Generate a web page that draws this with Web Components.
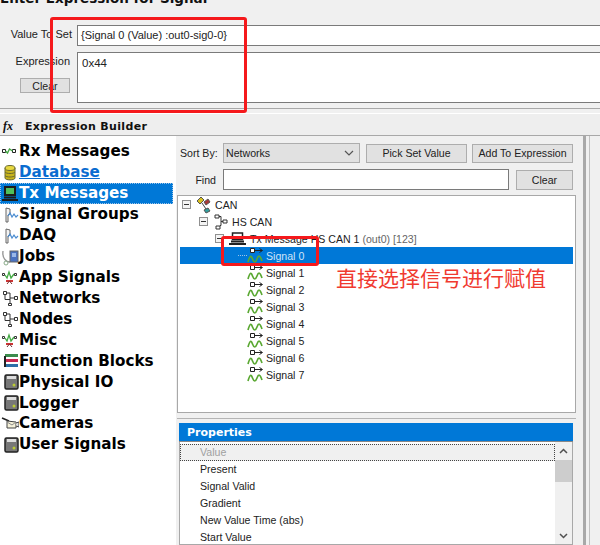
<!DOCTYPE html>
<html>
<head>
<meta charset="utf-8">
<style>
  html, body { margin: 0; padding: 0; height: 545px; overflow: hidden; background: #f0f0f0; }
</style>
</head>
<body>
<signal-dialog></signal-dialog>
<script>
const UI_FONT = `"Liberation Sans", "Noto Sans CJK SC", sans-serif`

const ICONS = {
  rx: `<path d="M2.500 7.500h3v3h-3zM12.500 7.500h3v3h-3z" fill="#fff" stroke="#222"/><path d="M5.500 9l2 2 2-4 3 2" fill="none" stroke="#4a4" stroke-width="1.400"/>`,
  db: `<path d="M5 5v10c0 2.500 10 2.500 10 0V5z" fill="#c8b41c" stroke="#6a6a30"/><ellipse cx="10" cy="5" rx="5" ry="2.500" fill="#e8d840" stroke="#6a6a30"/><path d="M5 9c1 2 9 2 10 0M5 12.500c1 2 9 2 10 0" fill="none" stroke="#6a6a30"/>`,
  tx: `<rect x="4" y="2" width="12" height="10" fill="#1c1c1c"/><rect x="6" y="4" width="8" height="6" fill="#4fbf5a"/><path d="M4 12.500h12v2H4zM2 15h16v2H2z" fill="#1c1c1c"/>`,
  group: `<path d="M6 3l4 1v5l-2 1v7H6z" fill="#f4f4f4" stroke="#666"/><path d="M8 11l2-3 2 4 2-3 2 3 2-2" fill="none" stroke="#4a8cd0" stroke-width="1.200"/>`,
  jobs: `<path d="M3 4c-1 7 3 11 7 11" fill="none" stroke="#999" stroke-width="1.400"/><circle cx="6" cy="16" r="2" fill="none" stroke="#8a8"/><rect x="10" y="4" width="8" height="11" fill="#4a72c0" stroke="#666"/><rect x="12" y="6" width="4" height="4" fill="#9ab8e8"/>`,
  app: `<path d="M2.500 6.500h2v2h-2zM14.500 6.500h2v2h-2z" fill="#fff" stroke="#333"/><path d="M5 8l2 3 2-6 2 6 3-4" fill="none" stroke="#4a4" stroke-width="1.300"/><path d="M6 14h7" stroke="#c33" stroke-width="2"/><path d="M7 17l2.500-3 2.500 3" fill="none" stroke="#733"/>`,
  net: `<path d="M3.500 3.500h3v3h-3zM14.500 8.500h3v3h-3zM8.500 15.500h3v2h-3z" fill="#fff" stroke="#333"/><path d="M6.500 5h3.500v10M10 10h4.500M5 6.500v5h5" fill="none" stroke="#333"/>`,
  fn: `<path d="M5 3h13v3H5z" fill="#3c8c4c"/><path d="M5 8h13v3H5z" fill="#c82850"/><path d="M5 13h13v3H5z" fill="#2c70a8"/><path d="M5 5v11" stroke="#222" stroke-width="2"/>`,
  io: `<rect x="5" y="3" width="13" height="14" rx="1.500" fill="#777" stroke="#222" stroke-width="1.500"/><path d="M7 4h9v3H7z" fill="#ddd"/><circle cx="14" cy="13" r="1.500" fill="#bc3"/>`,
  cam: `<path d="M2 4l7 3" stroke="#222" stroke-width="1.500"/><path d="M7 7l9 1v6H7z" fill="#f4f0d8" stroke="#444"/><path d="M16 9l3-1v5l-3-1" fill="#ddd" stroke="#444"/><path d="M7 8l5 3 4-3" fill="none" stroke="#888"/>`,
  sig: `<path d="M3.500 2.500h4v4h-4z" fill="#fff" stroke="#222"/><path d="M8 4.500h7M12.500 2.500l3 2-3 2" fill="none" stroke="#222"/><path d="M1 16c2-7 3-7 4.500-3s3 4 4.500 0 3-4 5 2" fill="none" stroke="#5aa832" stroke-width="1.700"/>`,
  can: `<path d="M1 6l4-4 3 3-4 4z" fill="#d8c020" stroke="#555"/><path d="M8 7l4-3 2 3-4 3z" fill="#a83838" stroke="#555"/><path d="M8 15l4-2 2 3-4 2z" fill="#30a0a0" stroke="#555"/><path d="M6 8l4 6" stroke="#444"/>`,
  hs: `<path d="M2 3h4v3H2zM10 8h4v3h-4zM3 14h4v3H3z" fill="#fff" stroke="#333"/><path d="M6 4.500h2v9M8 9.500h2M8 13.500H7" fill="none" stroke="#333"/>`,
  msg: `<rect x="3.500" y="4" width="10" height="6.500" fill="#fff" stroke="#222" stroke-width="1.500"/><path d="M2 11.500h13v2H2zM0 14h17v2H0z" fill="#222"/>`
}

function icon(name, size = 19) {
  return `<svg width="${size}" height="${size}" viewBox="0 0 19 19" style="display:block;flex:none">${ICONS[name]}</svg>`
}

class SideItem extends HTMLElement {
  constructor() {
    super()
    this.attachShadow({ mode: 'open' })
  }

  connectedCallback() {
    this.shadowRoot.innerHTML = `
      <style>
        :host {
          height: 20.930px;
          display: flex;
          align-items: center;
          box-sizing: border-box;
          color: #000;
          font: bold 15.200px "DejaVu Sans", sans-serif;
          white-space: nowrap;
        }
        :host([selected]) {
          background: #0078d7;
          color: #fff;
          outline: 1px dotted #9cc4e8;
          outline-offset: -1px;
        }
        :host([link]) { color: #0a6cd0; text-decoration: underline; }
      </style>
      ${icon(this.getAttribute('icon'))}<span><slot></slot></span>
    `
  }
}

class SideList extends HTMLElement {
  constructor() {
    super()
    this.attachShadow({ mode: 'open' })
    this.shadowRoot.innerHTML = `
      <style>
        :host {
          width: 176px;
          flex: none;
          display: flex;
          flex-direction: column;
          box-sizing: border-box;
          padding: 5px 3px 0 0;
          background: #fff;
        }
      </style>
      <slot></slot>
    `
  }
}

class PushButton extends HTMLElement {
  constructor() {
    super()
    this.attachShadow({ mode: 'open' })
    this.shadowRoot.innerHTML = `
      <style>
        :host {
          display: flex;
          align-items: center;
          justify-content: center;
          box-sizing: border-box;
          flex: none;
          background: #e1e1e1;
          border: 1px solid #adadad;
          color: #222;
          font: 10.600px ${UI_FONT};
          white-space: nowrap;
        }
      </style>
      <slot></slot>
    `
  }
}

class FormPane extends HTMLElement {
  constructor() {
    super()
    this.attachShadow({ mode: 'open' })
    this.shadowRoot.innerHTML = `
      <style>
        :host {
          display: block;
          height: 109px;
          flex: none;
          box-sizing: border-box;
          overflow: hidden;
          border-bottom: 1px solid #a8a8a8;
          font: 11px ${UI_FONT};
          color: #222;
        }
        .title {
          height: 25px;
          margin-top: -10px;
          font: bold 13.500px "DejaVu Sans", sans-serif;
          color: #111;
          white-space: nowrap;
        }
        .grid {
          display: grid;
          grid-template-columns: 77px 1fr;
          grid-template-rows: 21px 51px;
          row-gap: 6px;
          margin-top: 10px;
        }
        .lab { padding-right: 5px; text-align: right; }
        .row1 { line-height: 19px; }
        .field {
          background: #fff;
          border: 1px solid #7a7a7a;
          border-right: 0;
          box-sizing: border-box;
          padding: 0 0 0 3px;
        }
        .left { display: flex; flex-direction: column; align-items: flex-end; padding-right: 7px; }
        .left span { margin: 2px 0 0; line-height: 14px; }
        push-button { width: 50px; height: 15px; margin: 10px 0 0 0; }
        .area { padding: 4px 0 0 4px; font-size: 11.500px; }
      </style>
      <div class="title">Enter Expression for Signal</div>
      <div class="grid">
        <div class="lab row1">Value To Set</div>
        <div class="field row1">{Signal 0 (Value) :out0-sig0-0}</div>
        <div class="left"><span>Expression</span><push-button>Clear</push-button></div>
        <div class="field area">0x44</div>
      </div>
    `
  }
}

class BuilderHeader extends HTMLElement {
  constructor() {
    super()
    this.attachShadow({ mode: 'open' })
    this.shadowRoot.innerHTML = `
      <style>
        :host {
          height: 23px;
          flex: none;
          margin-top: 4px;
          padding-top: 3px;
          display: flex;
          align-items: center;
          box-sizing: border-box;
          border-top: 1px solid #fff;
          border-bottom: 1px solid #a8a8a8;
          background: #eeeeee;
          color: #111;
          white-space: nowrap;
        }
        i { width: 25px; padding-left: 3px; box-sizing: border-box; font: italic bold 12px "Liberation Serif", serif; }
        b { font: bold 11px "DejaVu Sans", sans-serif; letter-spacing: 0.350px; }
      </style>
      <i>fx</i><b>Expression Builder</b>
    `
  }
}

class SortBar extends HTMLElement {
  constructor() {
    super()
    this.attachShadow({ mode: 'open' })
    this.shadowRoot.innerHTML = `
      <style>
        :host {
          display: flex;
          flex-direction: column;
          gap: 6px;
          padding: 7px 5px 0 3px;
          height: 59px;
          flex: none;
          box-sizing: border-box;
          font: 10.600px ${UI_FONT};
          color: #222;
        }
        .row { display: flex; align-items: center; }
        .select {
          width: 137px; height: 20px; box-sizing: border-box;
          background: #e1e1e1; border: 1px solid #adadad;
          display: flex; align-items: center; justify-content: space-between;
          padding: 0 5px 0 2px; flex: none;
        }
        .btn1 { width: 101px; height: 19px; margin-left: 6px; }
        .btn2 { width: 101px; height: 19px; margin-left: 5px; }
        .find { width: 43px; text-align: right; padding-right: 7px; box-sizing: border-box; flex: none; }
        .input { width: 286px; height: 21px; box-sizing: border-box; background: #fff; border: 1px solid #7a7a7a; flex: none; }
        .btn3 { width: 57px; height: 20px; margin-left: 7px; }
        .lab { flex: none; width: 43px; }
      </style>
      <div class="row">
        <span class="lab">Sort By:</span>
        <div class="select"><span>Networks</span>
          <svg width="10" height="6" viewBox="0 0 10 6"><path d="M1 1l4 4 4-4" fill="none" stroke="#555" stroke-width="1.200"/></svg>
        </div>
        <push-button class="btn1">Pick Set Value</push-button>
        <push-button class="btn2">Add To Expression</push-button>
      </div>
      <div class="row">
        <span class="find">Find</span>
        <div class="input"></div>
        <push-button class="btn3">Clear</push-button>
      </div>
    `
  }
}

class TreeRow extends HTMLElement {
  constructor() {
    super()
    this.attachShadow({ mode: 'open' })
  }

  connectedCallback() {
    const depth = +this.getAttribute('depth')
    const box = this.hasAttribute('open')
      ? `<span class="box"><svg width="9" height="9" viewBox="0 0 9 9"><rect x="0.500" y="0.500" width="8" height="8" fill="#f4f4f4" stroke="#909090"/><path d="M2 4.500h5" stroke="#333"/></svg></span>`
      : ''
    this.shadowRoot.innerHTML = `
      <style>
        :host {
          height: 17px;
          display: flex;
          align-items: center;
          box-sizing: border-box;
          padding-left: ${depth}px;
          color: #222;
          font: 10.600px ${UI_FONT};
          white-space: nowrap;
        }
        :host([selected]) { background: #0078d7; color: #cfe4f7; }
        .box { width: 14px; flex: none; display: flex; }
        .dash { width: 9px; margin-left: -9px; flex: none; border-top: 1px dotted #9cc4e8; }
        svg { flex: none; }
        .t { margin-left: ${this.getAttribute('gap') || 0}px; }
      </style>
      ${box}${this.hasAttribute('selected') ? '<span class="dash"></span>' : ''}${icon(this.getAttribute('icon'), 19)}<span class="t"><slot></slot></span>
    `
  }
}

class TreeView extends HTMLElement {
  constructor() {
    super()
    this.attachShadow({ mode: 'open' })
    this.shadowRoot.innerHTML = `
      <style>
        :host {
          height: 218px;
          flex: none;
          display: block;
          box-sizing: border-box;
          padding: 0 2px 0 2px;
          background: #fff;
          border: 1px solid #a8a8a8;
        }
      </style>
      <slot></slot>
    `
  }
}

class PropsPanel extends HTMLElement {
  constructor() {
    super()
    this.attachShadow({ mode: 'open' })
    this.shadowRoot.innerHTML = `
      <style>
        :host {
          display: flex;
          flex-direction: column;
          flex: 1;
          min-height: 0;
          margin: 4px 0 0 2px;
          width: 394px;
          font: 10.600px ${UI_FONT};
          color: #222;
        }
        .head {
          height: 19px;
          flex: none;
          box-sizing: border-box;
          padding-left: 8px;
          background: #0078d7;
          color: #fff;
          font: bold 11px/19px "DejaVu Sans", sans-serif;
          border-bottom: 1px solid #888;
        }
        .body {
          flex: 1;
          display: flex;
          overflow: hidden;
          background: #fff;
          border: 1px solid #a8a8a8;
          border-top: 0;
        }
        .rows { flex: 1; padding-top: 2px; min-width: 0; }
        .r { height: 17px; line-height: 17px; padding-left: 20px; }
        .r.first { background: #f0f0f0; color: #a0a0a0; outline: 1px dotted #444; outline-offset: -1px; }
        .bar { width: 17px; flex: none; background: #f0f0f0; display: flex; flex-direction: column; align-items: center; justify-content: space-between; padding: 6px 0 5px; box-sizing: border-box; position: relative; }
        .thumb { position: absolute; top: 18px; left: 0; width: 17px; height: 22px; background: #cdcdcd; }
      </style>
      <div class="head">Properties</div>
      <div class="body">
        <div class="rows">
          <div class="r first">Value</div>
          <div class="r">Present</div>
          <div class="r">Signal Valid</div>
          <div class="r">Gradient</div>
          <div class="r">New Value Time (abs)</div>
          <div class="r">Start Value</div>
        </div>
        <div class="bar">
          <svg width="9" height="6" viewBox="0 0 9 6"><path d="M1 5l3.500-3.500L8 5" fill="none" stroke="#505050" stroke-width="1.500"/></svg>
          <div class="thumb"></div>
          <svg width="9" height="6" viewBox="0 0 9 6"><path d="M1 1l3.500 3.500L8 1" fill="none" stroke="#505050" stroke-width="1.500"/></svg>
        </div>
      </div>
    `
  }
}

class RightPane extends HTMLElement {
  constructor() {
    super()
    this.attachShadow({ mode: 'open' })
    this.shadowRoot.innerHTML = `
      <style>
        :host {
          width: 400px;
          flex: none;
          display: flex;
          flex-direction: column;
          box-sizing: border-box;
          padding-left: 1px;
        }
        .split { height: 1px; flex: none; margin-top: 5px; background: #b4b4b4; }
      </style>
      <sort-bar></sort-bar>
      <slot></slot>
      <div class="split"></div>
      <props-panel></props-panel>
    `
  }
}

// red markup drawn over the screenshot
class RedBox extends HTMLElement {
  constructor() {
    super()
    this.attachShadow({ mode: 'open' })
    this.shadowRoot.innerHTML = `
      <style>
        :host {
          position: absolute;
          box-sizing: border-box;
          border: 3px solid #f5191c;
          border-radius: 3px;
          pointer-events: none;
        }
      </style>
    `
  }
}

class RedNote extends HTMLElement {
  constructor() {
    super()
    this.attachShadow({ mode: 'open' })
    this.shadowRoot.innerHTML = `
      <style>
        :host {
          position: absolute;
          color: #f03a30;
          font: 21px "Noto Sans CJK SC", sans-serif;
          white-space: nowrap;
        }
      </style>
      <slot></slot>
    `
  }
}

class SignalDialog extends HTMLElement {
  constructor() {
    super()
    this.attachShadow({ mode: 'open' })
    const signals = [1, 2, 3, 4, 5, 6, 7]
      .map((n) => `<tree-row depth="67" icon="sig">Signal ${n}</tree-row>`)
      .join('')
    this.shadowRoot.innerHTML = `
      <style>
        :host {
          position: relative;
          display: flex;
          flex-direction: column;
          width: 600px;
          height: 545px;
          overflow: hidden;
          background: #f0f0f0;
        }
        .main { flex: 1; display: flex; min-height: 0; }
        .rules { flex: 1; display: flex; padding-left: 7px; }
        .rules span { width: 3px; background: #a8a8a8; }
        .rules em { width: 3px; }
        .rules u { width: 1px; background: #c0c0c0; }
        .box1 { left: 50px; top: 17px; width: 197px; height: 96px; }
        .box2 { left: 221px; top: 236px; width: 98px; height: 30px; }
        .note { left: 336px; top: 262px; }
      </style>
      <form-pane></form-pane>
      <builder-header></builder-header>
      <div class="main">
        <side-list>
          <side-item icon="rx">Rx Messages</side-item>
          <side-item icon="db" link>Database</side-item>
          <side-item icon="tx" selected>Tx Messages</side-item>
          <side-item icon="group">Signal Groups</side-item>
          <side-item icon="group">DAQ</side-item>
          <side-item icon="jobs">Jobs</side-item>
          <side-item icon="app">App Signals</side-item>
          <side-item icon="net">Networks</side-item>
          <side-item icon="net">Nodes</side-item>
          <side-item icon="app">Misc</side-item>
          <side-item icon="fn">Function Blocks</side-item>
          <side-item icon="io">Physical IO</side-item>
          <side-item icon="io">Logger</side-item>
          <side-item icon="cam">Cameras</side-item>
          <side-item icon="io">User Signals</side-item>
        </side-list>
        <right-pane>
          <tree-view>
            <tree-row depth="2" icon="can" open>CAN</tree-row>
            <tree-row depth="19" icon="hs" open>HS CAN</tree-row>
            <tree-row depth="35" icon="msg" gap="2" open>Tx Message HS CAN 1 <span style="color:#666">(out0) [123]</span></tree-row>
            <tree-row depth="67" icon="sig" selected>Signal 0</tree-row>
            ${signals}
          </tree-view>
        </right-pane>
        <div class="rules"><span></span><em></em><u></u></div>
      </div>
      <red-box class="box1"></red-box>
      <red-box class="box2"></red-box>
      <red-note class="note">直接选择信号进行赋值</red-note>
    `
  }
}

customElements.define('side-item', SideItem)
customElements.define('side-list', SideList)
customElements.define('push-button', PushButton)
customElements.define('form-pane', FormPane)
customElements.define('builder-header', BuilderHeader)
customElements.define('sort-bar', SortBar)
customElements.define('tree-row', TreeRow)
customElements.define('tree-view', TreeView)
customElements.define('props-panel', PropsPanel)
customElements.define('right-pane', RightPane)
customElements.define('red-box', RedBox)
customElements.define('red-note', RedNote)
customElements.define('signal-dialog', SignalDialog)
</script>
</body>
</html>
